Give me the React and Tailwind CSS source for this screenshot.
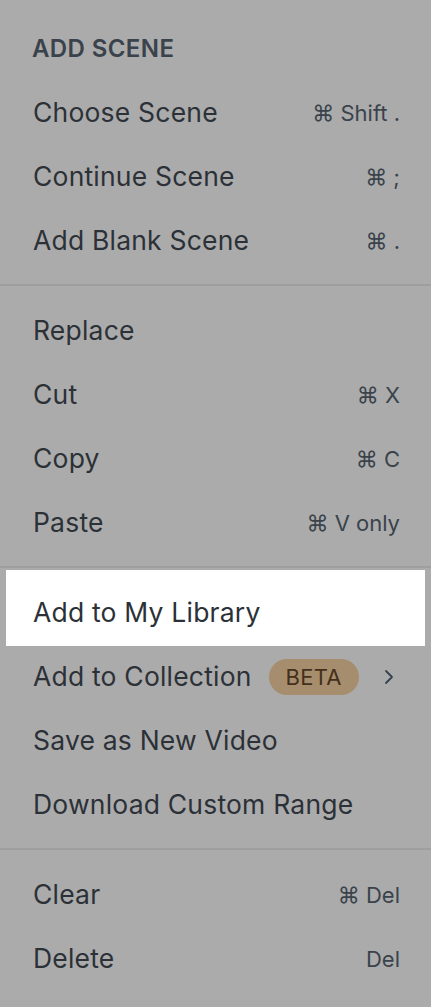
import React from "react";

const F = { fontFamily: "Inter, 'Open Sans', sans-serif" };

function Row({ label, shortcut, children }) {
  return (
    <div className="flex h-16 items-center justify-between pt-[2px] pl-[33px] pr-[31px]">
      <span className="text-[26.5px] tracking-[0.2px] text-[#2b3137]">{label}</span>
      {children}
      {shortcut && <span className="text-[22px] text-[#3a434b]">{shortcut}</span>}
    </div>
  );
}

function Divider() {
  return <div className="h-[2px] bg-[#9e9e9e]" />;
}

export default function App() {
  return (
    <div className="min-h-[1007px] w-full bg-[#ababab]" style={F}>
      <div className="pt-[16px] pb-3">
        <div className="flex h-16 items-center pt-[2px] pl-[32px]">
          <span className="text-[24px] font-semibold tracking-[0.4px] text-[#3a424b]">ADD SCENE</span>
        </div>
        <Row label="Choose Scene" shortcut="⌘ Shift ." />
        <Row label="Continue Scene" shortcut="⌘ ;" />
        <Row label="Add Blank Scene" shortcut="⌘ ." />
      </div>
      <Divider />
      <div className="pt-3 pb-3">
        <Row label="Replace" />
        <Row label="Cut" shortcut="⌘ X" />
        <Row label="Copy" shortcut="⌘ C" />
        <Row label="Paste" shortcut="⌘ V only" />
      </div>
      <Divider />
      <div className="pt-3 pb-3">
        <div className="mx-[6px] -mt-[10px] -mb-[2px] flex h-[76px] items-center bg-white pt-[10px] pl-[27px]">
          <span className="text-[26.5px] tracking-[0.2px] text-[#2b3137]">Add to My Library</span>
        </div>
        <div className="flex h-16 items-center pt-[2px] pl-[33px] pr-[37px]">
          <span className="text-[26.5px] tracking-[0.2px] text-[#2b3137]">Add to Collection</span>
          <span className="ml-[17px] flex h-[36px] w-[90px] items-center justify-center rounded-full bg-[#a58d6e] text-[22px] tracking-[0.3px] text-[#44301a]">
            BETA
          </span>
          <span className="ml-auto">
            <svg width="10" height="16" viewBox="0 0 10 16" fill="none">
              <path d="M2 2l6 6-6 6" stroke="#37424e" strokeWidth="1.8" strokeLinecap="round" strokeLinejoin="round" />
            </svg>
          </span>
        </div>
        <Row label="Save as New Video" />
        <Row label="Download Custom Range" />
      </div>
      <Divider />
      <div className="pt-3">
        <Row label="Clear" shortcut="⌘ Del" />
        <Row label="Delete" shortcut="Del" />
      </div>
    </div>
  );
}
